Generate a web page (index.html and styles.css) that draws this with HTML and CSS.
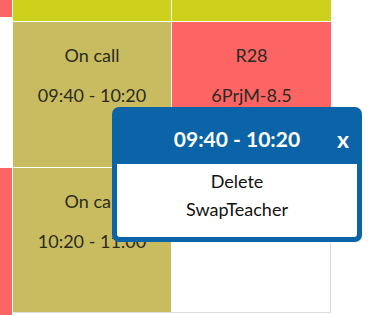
FILE: index.html
```html
<!DOCTYPE html>
<html>
<head>
<meta charset="utf-8">
<link rel="stylesheet" href="styles.css">
</head>
<body>
<div class="board">
  <div class="side">
    <div class="side-top"></div>
    <div class="side-blank"></div>
    <div class="side-red"></div>
  </div>
  <div class="grid">
    <div class="cell lime"></div>
    <div class="cell lime"></div>
    <div class="cell olive"><span class="line">On call</span><span class="line">09:40 - 10:20</span></div>
    <div class="cell red"><span class="line">R28</span><span class="line">6PrjM-8.5</span></div>
    <div class="cell olive last"><span class="line">On call</span><span class="line">10:20 - 11:00</span></div>
    <div class="cell empty last"></div>
  </div>
</div>
<div class="popup">
  <div class="popup-head">
    <span class="popup-title">09:40 - 10:20</span>
    <span class="popup-close">x</span>
  </div>
  <div class="popup-body">
    <div class="action">Delete</div>
    <div class="action">SwapTeacher</div>
  </div>
</div>
</body>
</html>
```
FILE: styles.css
```css
html, body {
  margin: 0;
  padding: 0;
  background: #ffffff;
  font-family: Lato, "Open Sans", sans-serif;
}
.board {
  display: flex;
  gap: 1px;
  width: 373px;
  height: 315px;
  overflow: hidden;
}
.side {
  width: 12px;
  display: flex;
  flex-direction: column;
}
.side-top {
  height: 17px;
  background: #fd6464;
}
.side-blank {
  height: 151px;
  background: #ffffff;
}
.side-red {
  flex: 1;
  background: #fd6464;
}
.grid {
  display: grid;
  grid-template-columns: 158px 159px;
  grid-template-rows: 21px 145px 144px;
  gap: 1px;
  align-self: flex-start;
  border-bottom: 1px solid #dcdcdc;
}
.cell {
  display: flex;
  flex-direction: column;
  align-items: center;
  padding-top: 22px;
  gap: 18px;
  box-sizing: border-box;
  color: #2b2b22;
  font-size: 18px;
}
.line {
  line-height: 22px;
}
.lime {
  background: #ced11c;
  padding-top: 0;
}
.olive {
  background: #c9bc60;
}
.red {
  background: #fd6464;
}
.empty {
  background: #ffffff;
  border-right: 1px solid #dcdcdc;
}
.popup {
  position: absolute;
  left: 112px;
  top: 107px;
  width: 250px;
  height: 135px;
  box-sizing: border-box;
  background: #0b63a8;
  border-radius: 7px;
  padding: 0 5px 5px 5px;
  display: flex;
  flex-direction: column;
}
.popup-head {
  position: relative;
  height: 57px;
  display: flex;
  justify-content: center;
  align-items: center;
  padding-top: 5px;
  box-sizing: border-box;
}
.popup-title {
  color: #ffffff;
  font-weight: 700;
  font-size: 21px;
}
.popup-close {
  position: absolute;
  right: 8px;
  top: 18px;
  color: #ffffff;
  font-weight: 700;
  font-size: 23px;
}
.popup-body {
  flex: 1;
  background: #ffffff;
  border-radius: 0 0 3px 3px;
  padding-top: 3px;
  text-align: center;
}
.action {
  line-height: 28px;
  font-size: 18px;
  color: #111111;
}
```
